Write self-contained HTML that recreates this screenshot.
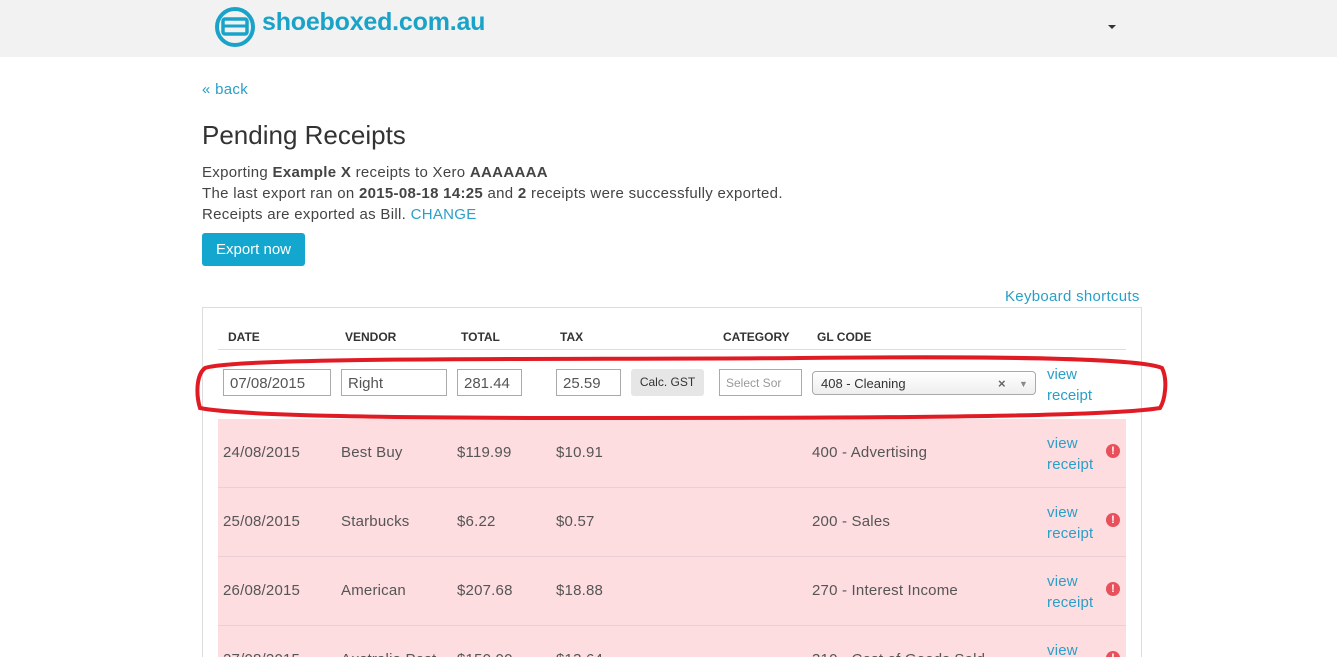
<!DOCTYPE html><html><head><meta charset="utf-8"><style>
html,body{margin:0;width:1337px;height:657px;overflow:hidden}
body{background:#fff;font-family:"Liberation Sans",sans-serif;color:#444;position:relative}
.a{position:absolute;white-space:nowrap}
.l{color:#2a9fc7}
.t{letter-spacing:0.3px}
.inp{position:absolute;border:1px solid #aaa;height:27px;box-sizing:border-box;font-size:15px;padding:5px 6px 0;color:#555;background:#fff}
.h{position:absolute;top:330px;font-size:12px;font-weight:bold;color:#333}
.row{position:absolute;left:218px;width:908px;height:68px;background:#fddde0;border-bottom:1px solid #e9d0d4;font-size:15px;color:#555;letter-spacing:0.2px}
.row span{position:absolute;top:25px}
.err{position:absolute;left:888px;top:25px;width:14px;height:14px;border-radius:50%;background:#e8505b;color:#fff;font-size:11px;font-weight:bold;text-align:center;line-height:14px}
</style></head><body>
<div class="a" style="left:0;top:0;width:1337px;height:57px;background:#f2f2f2"></div>
<svg class="a" style="left:214px;top:6px" width="42" height="42"><circle cx="21" cy="21" r="18" fill="none" stroke="#1aa3c9" stroke-width="4"/><rect x="9" y="13" width="24" height="15" rx="2" fill="none" stroke="#1aa3c9" stroke-width="3.5"/><line x1="9" y1="20" x2="33" y2="20" stroke="#1aa3c9" stroke-width="3"/></svg>
<div class="a" style="left:262px;top:8px;font-size:25px;font-weight:bold;color:#1aa3c9;letter-spacing:-0.2px">shoeboxed.com.au</div>
<div class="a" style="left:1108px;top:25px;width:0;height:0;border-left:4px solid transparent;border-right:4px solid transparent;border-top:4px solid #333"></div>
<div class="a l t" style="left:202px;top:81px;font-size:15px">« back</div>
<div class="a" style="left:202px;top:120px;font-size:26px;color:#333">Pending Receipts</div>
<div class="a t" style="left:202px;top:162px;font-size:15px;line-height:21px">Exporting <b>Example X</b> receipts to Xero <b>AAAAAAA</b><br>The last export ran on <b>2015-08-18 14:25</b> and <b>2</b> receipts were successfully exported.<br>Receipts are exported as Bill. <span class="l">CHANGE</span></div>
<div class="a" style="left:202px;top:233px;width:103px;height:33px;background:#13a7cf;border-radius:3px;color:#fff;font-size:15px;text-align:center;line-height:33px">Export now</div>
<div class="a l t" style="left:1005px;top:288px;font-size:15px">Keyboard shortcuts</div>
<div class="a" style="left:202px;top:307px;width:938px;height:400px;border:1px solid #ddd"></div>
<div class="h" style="left:228px">DATE</div><div class="h" style="left:345px">VENDOR</div><div class="h" style="left:461px">TOTAL</div><div class="h" style="left:560px">TAX</div><div class="h" style="left:723px">CATEGORY</div><div class="h" style="left:817px">GL CODE</div>
<div class="a" style="left:218px;top:349px;width:908px;height:1px;background:#ddd"></div>
<div class="inp" style="left:223px;top:369px;width:108px">07/08/2015</div>
<div class="inp" style="left:341px;top:369px;width:106px">Right</div>
<div class="inp" style="left:457px;top:369px;width:65px">281.44</div>
<div class="inp" style="left:556px;top:369px;width:65px">25.59</div>
<div class="a" style="left:631px;top:369px;width:73px;height:27px;background:#e6e6e6;border-radius:3px;font-size:12px;text-align:center;line-height:27px;color:#333">Calc. GST</div>
<div class="inp" style="left:719px;top:369px;width:83px;font-size:12px;color:#999;padding-top:6px">Select Sor</div>
<div class="a" style="left:812px;top:371px;width:224px;height:24px;border:1px solid #aaa;border-radius:4px;background:linear-gradient(#fff,#eee);font-size:13px;line-height:24px;box-sizing:border-box;padding-left:8px;color:#333">408 - Cleaning<span style="position:absolute;left:185px;color:#666;font-weight:bold">×</span><span style="position:absolute;left:206px;color:#888;font-size:9px">▼</span></div>
<div class="a l" style="left:1047px;top:364px;font-size:15px;line-height:21px">view<br>receipt</div>
<div class="row" style="top:419px"><span style="left:5px">24/08/2015</span><span style="left:123px">Best Buy</span><span style="left:239px">$119.99</span><span style="left:338px">$10.91</span><span style="left:594px">400 - Advertising</span><span class="l" style="left:829px;top:14px;line-height:21px">view<br>receipt</span><div class="err">!</div></div>
<div class="row" style="top:488px"><span style="left:5px">25/08/2015</span><span style="left:123px">Starbucks</span><span style="left:239px">$6.22</span><span style="left:338px">$0.57</span><span style="left:594px">200 - Sales</span><span class="l" style="left:829px;top:14px;line-height:21px">view<br>receipt</span><div class="err">!</div></div>
<div class="row" style="top:557px"><span style="left:5px">26/08/2015</span><span style="left:123px">American</span><span style="left:239px">$207.68</span><span style="left:338px">$18.88</span><span style="left:594px">270 - Interest Income</span><span class="l" style="left:829px;top:14px;line-height:21px">view<br>receipt</span><div class="err">!</div></div>
<div class="row" style="top:626px;height:31px"><span style="left:5px">27/08/2015</span><span style="left:123px">Australia Post</span><span style="left:239px">$150.00</span><span style="left:338px">$13.64</span><span style="left:594px">310 - Cost of Goods Sold</span><span class="l" style="left:829px;top:14px;line-height:21px">view<br>receipt</span><div class="err">!</div></div>
<svg class="a" style="left:0;top:0" width="1337" height="657"><path d="M205 368 C240 356 600 360 800 358 C1000 356 1140 358 1162 368 C1168 380 1165 400 1160 408 C1100 418 800 418 600 418 C400 418 240 416 200 408 C196 395 196 375 205 368 Z" fill="none" stroke="#e01b24" stroke-width="4"/></svg>
</body></html>
